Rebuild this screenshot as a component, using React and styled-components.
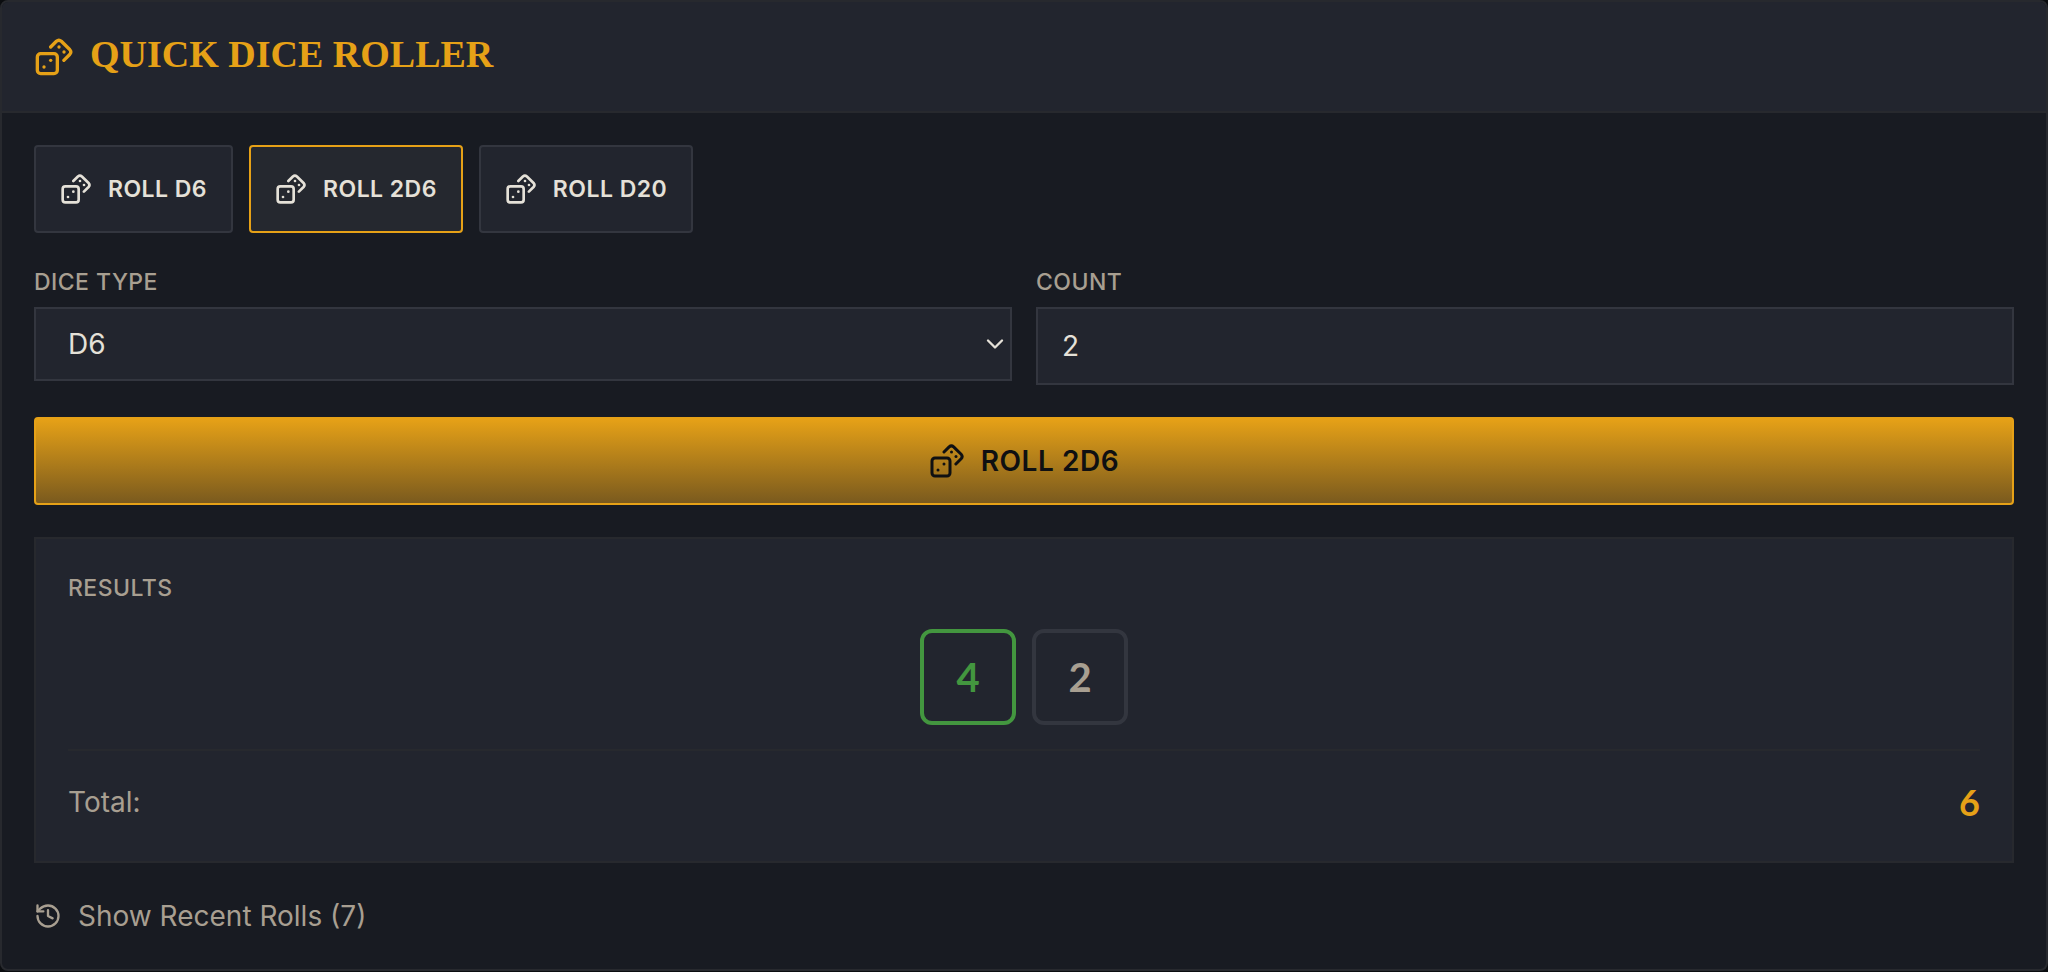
import React, { useState } from "react";
import styled, { createGlobalStyle, css } from "styled-components";
import { Dices, History, ChevronDown } from "lucide-react";

const color = {
  page: "#0b0d10",
  card: "#181b22",
  panel: "#22252e",
  panelActive: "#25282f",
  line: "#33363f",
  lineSoft: "#27292e",
  gold: "#e6a117",
  text: "#e5e1d8",
  muted: "#a89f91",
  success: "#43963f",
  ink: "#0f1012",
};

const GlobalStyle = createGlobalStyle`
  *, *::before, *::after { box-sizing: border-box; }
  body {
    margin: 0;
    background: ${color.page};
    color: ${color.text};
    font-family: Inter, "Liberation Sans", sans-serif;
    font-size: 28px;
    line-height: 42px;
  }
`;

const Card = styled.section`
  border: 2px solid ${color.lineSoft};
  border-radius: 8px;
  background: ${color.card};
  overflow: hidden;
`;

const CardHeader = styled.header`
  display: flex;
  align-items: center;
  gap: 16px;
  padding: 32px;
  background: ${color.panel};
  border-bottom: 2px solid ${color.lineSoft};
  color: ${color.gold};
`;

const Title = styled.h2`
  margin: 0;
  padding-bottom: 4px;
  font-family: "Liberation Serif", serif;
  font-size: 38px;
  line-height: 41px;
  font-weight: 700;
  text-transform: uppercase;
`;

const CardBody = styled.div`
  display: flex;
  flex-direction: column;
  gap: 32px;
  padding: 32px;
`;

const QuickRow = styled.div`
  display: flex;
  flex-wrap: wrap;
  gap: 16px;
`;

const Button = styled.button`
  display: inline-flex;
  align-items: center;
  justify-content: center;
  gap: 16px;
  min-height: 88px;
  padding: 0 24px;
  border: 2px solid ${color.line};
  border-radius: 4px;
  background: ${color.panel};
  color: ${color.text};
  font-family: inherit;
  font-size: 23px;
  font-weight: 600;
  letter-spacing: 0.02em;
  text-transform: uppercase;
  cursor: pointer;

  ${(p) =>
    p.$active &&
    css`
      border-color: ${color.gold};
      background: ${color.panelActive};
    `}

  ${(p) =>
    p.$primary &&
    css`
      border-color: ${color.gold};
      background: linear-gradient(180deg, ${color.gold}, #7a5a1e);
      color: ${color.ink};
      font-size: 28px;
    `}
`;

const Fields = styled.div`
  display: grid;
  grid-template-columns: repeat(2, minmax(0, 1fr));
  align-items: start;
  gap: 24px;
`;

const Field = styled.div`
  display: flex;
  flex-direction: column;
  gap: 8px;
`;

const labelText = css`
  margin: 0;
  color: ${color.muted};
  font-size: 23px;
  line-height: 34px;
  font-weight: 500;
  letter-spacing: 0.02em;
  text-transform: uppercase;
`;

const Label = styled.label`
  ${labelText}
`;

const controlStyle = css`
  width: 100%;
  border: 2px solid ${color.line};
  border-radius: 0;
  background: ${color.panel};
  color: ${color.text};
  font: inherit;
`;

const SelectWrap = styled.div`
  display: grid;
  align-items: center;

  > * { grid-area: 1 / 1; }
  > svg {
    justify-self: end;
    margin-right: 3px;
    pointer-events: none;
  }
`;

const Select = styled.select`
  ${controlStyle}
  appearance: none;
  height: 74px;
  padding: 0 32px;
`;

const Input = styled.input`
  ${controlStyle}
  appearance: textfield;
  height: 78px;
  padding: 0 24px;

  &::-webkit-inner-spin-button { appearance: none; }
`;

const Results = styled.section`
  display: flex;
  flex-direction: column;
  gap: 24px;
  padding: 32px;
  border: 2px solid ${color.lineSoft};
  background: ${color.panel};
`;

const ResultsTitle = styled.h3`
  ${labelText}
`;

const DiceRow = styled.div`
  display: flex;
  flex-wrap: wrap;
  justify-content: center;
  gap: 16px;
`;

const Die = styled.div`
  display: grid;
  place-items: center;
  width: 96px;
  height: 96px;
  border: 4px solid ${(p) => (p.$success ? color.success : color.line)};
  border-radius: 12px;
  color: ${(p) => (p.$success ? color.success : color.muted)};
  font-family: Lato, sans-serif;
  font-size: 40px;
  font-weight: 700;
`;

const TotalRow = styled.div`
  display: flex;
  align-items: center;
  justify-content: space-between;
  padding-top: 24px;
  border-top: 2px solid ${color.lineSoft};
  color: ${color.muted};
  line-height: 54px;
`;

const TotalValue = styled.output`
  color: ${color.gold};
  font-family: Lato, sans-serif;
  font-size: 36px;
  font-weight: 700;
`;

const HistoryButton = styled.button`
  display: inline-flex;
  align-items: center;
  align-self: flex-start;
  gap: 16px;
  padding: 0;
  border: 0;
  background: none;
  color: ${color.muted};
  font: inherit;
  cursor: pointer;
`;

const presets = [
  { label: "Roll D6", type: "D6", count: 1 },
  { label: "Roll 2D6", type: "D6", count: 2 },
  { label: "Roll D20", type: "D20", count: 1 },
];

export default function App() {
  const [type, setType] = useState("D6");
  const [count, setCount] = useState(2);
  const [rolls, setRolls] = useState([4, 2]);
  const [rollCount, setRollCount] = useState(7);

  const roll = (dieType, dieCount) => {
    const sides = Number(dieType.slice(1));
    setType(dieType);
    setCount(dieCount);
    setRolls(Array.from({ length: dieCount }, () => 1 + Math.floor(Math.random() * sides)));
    setRollCount(rollCount + 1);
  };

  return (
    <>
      <GlobalStyle />
      <Card>
        <CardHeader>
          <Dices size={40} aria-hidden="true" />
          <Title>Quick Dice Roller</Title>
        </CardHeader>
        <CardBody>
          <QuickRow>
            {presets.map((p) => (
              <Button
                key={p.label}
                type="button"
                $active={p.type === type && p.count === count}
                onClick={() => roll(p.type, p.count)}
              >
                <Dices size={32} aria-hidden="true" />
                {p.label}
              </Button>
            ))}
          </QuickRow>
          <Fields>
            <Field>
              <Label htmlFor="dice-type">Dice Type</Label>
              <SelectWrap>
                <Select id="dice-type" value={type} onChange={(e) => setType(e.target.value)}>
                  <option>D6</option>
                  <option>D20</option>
                </Select>
                <ChevronDown size={28} aria-hidden="true" />
              </SelectWrap>
            </Field>
            <Field>
              <Label htmlFor="dice-count">Count</Label>
              <Input
                id="dice-count"
                type="number"
                min="1"
                max="20"
                value={count}
                onChange={(e) => setCount(Number(e.target.value))}
              />
            </Field>
          </Fields>
          <Button type="button" $primary onClick={() => roll(type, count)}>
            <Dices size={36} aria-hidden="true" />
            Roll {count > 1 ? count : ""}{type}
          </Button>
          <Results>
            <ResultsTitle>Results</ResultsTitle>
            <DiceRow>
              {rolls.map((value, i) => (
                <Die key={i} $success={value >= 4}>{value}</Die>
              ))}
            </DiceRow>
            <TotalRow>
              <span>Total:</span>
              <TotalValue>{rolls.reduce((a, b) => a + b, 0)}</TotalValue>
            </TotalRow>
          </Results>
          <HistoryButton type="button">
            <History size={28} aria-hidden="true" />
            Show Recent Rolls ({rollCount})
          </HistoryButton>
        </CardBody>
      </Card>
    </>
  );
}
